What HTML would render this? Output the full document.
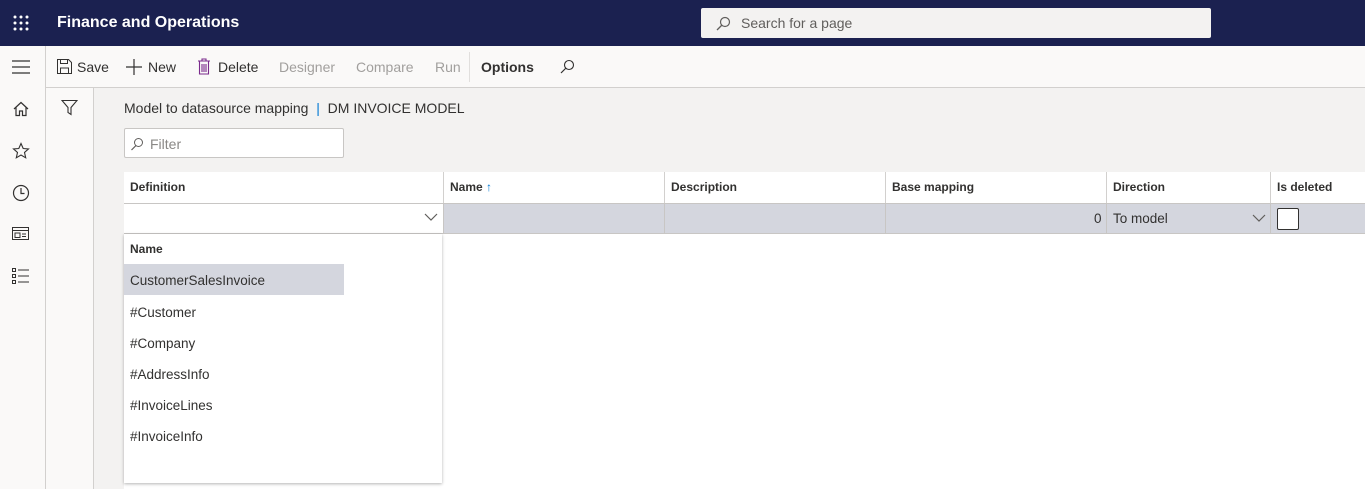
<!DOCTYPE html>
<html><head><style>
*{box-sizing:border-box;margin:0;padding:0}
body{width:1365px;height:489px;overflow:hidden;font-family:"Segoe UI","Liberation Sans",sans-serif;font-size:14px;color:#323130;background:#f3f2f1;position:relative}
.a{position:absolute}
.hdr{left:0;top:0;width:1365px;height:46px;background:#1b2150;color:#fff}
.rail{left:0;top:46px;width:46px;height:443px;background:#faf9f8;border-right:1px solid #d2d0ce}
.tb{left:46px;top:46px;width:1319px;height:42px;background:#faf9f8;border-bottom:1px solid #d2d0ce}
.tb span{position:absolute;top:13px;font-size:14px}
.fp{left:46px;top:88px;width:48px;height:401px;background:#faf9f8;border-right:1px solid #d2d0ce}
.grid{left:124px;top:172px;width:1241px;height:317px;background:#fff}
.th{position:absolute;top:0;height:31px;border-right:1px solid #d2d0ce;font-size:12px;font-weight:600;padding:8px 6px;color:#323130}
.row{left:124px;top:203px;width:1241px;height:31px;background:#d4d6de;border-top:1px solid #c8c6c4;border-bottom:1px solid #c8c6c4}
.dd{left:124px;top:234px;width:318px;height:249px;background:#fff;box-shadow:0 1px 3px rgba(0,0,0,.3)}
.it{position:absolute;left:6px;font-size:13.5px}
</style></head><body>
<div class="a hdr">
<svg class="a" style="left:13px;top:15px" width="16" height="16"><g fill="#fff"><circle cx="2" cy="2" r="1.5"/><circle cx="8" cy="2" r="1.5"/><circle cx="14" cy="2" r="1.5"/><circle cx="2" cy="8" r="1.5"/><circle cx="8" cy="8" r="1.5"/><circle cx="14" cy="8" r="1.5"/><circle cx="2" cy="14" r="1.5"/><circle cx="8" cy="14" r="1.5"/><circle cx="14" cy="14" r="1.5"/></g></svg>
<div class="a" style="left:57px;top:14px;font-size:16px;font-weight:600">Finance and Operations</div>
<div class="a" style="left:701px;top:8px;width:510px;height:30px;background:#f3f2f1;border-radius:2px;color:#605e5c">
<svg class="a" style="left:14px;top:8px" width="16" height="16"><circle cx="10" cy="6" r="4.5" fill="none" stroke="#605e5c" stroke-width="1.2"/><path d="M7 9L2 14" stroke="#605e5c" stroke-width="1.3"/></svg>
<span class="a" style="left:40px;top:7px">Search for a page</span></div>
</div>
<div class="a rail">
<svg class="a" style="left:12px;top:14px" width="18" height="14"><path d="M0 1h18M0 7h18M0 13h18" stroke="#323130" stroke-width="1.2"/></svg>
<svg class="a" style="left:13px;top:55px" width="16" height="16"><path d="M1 8L8 1.5L15 8M3 6.5V14.5H6.5V10H9.5V14.5H13V6.5" fill="none" stroke="#323130" stroke-width="1.2"/></svg>
<svg class="a" style="left:12px;top:96px" width="18" height="18"><path d="M9 1.5l2.2 5 5.3.4-4 3.6 1.2 5.3L9 13l-4.7 2.8 1.2-5.3-4-3.6 5.3-.4z" fill="none" stroke="#323130" stroke-width="1.1"/></svg>
<svg class="a" style="left:12px;top:138px" width="18" height="18"><circle cx="9" cy="9" r="7.5" fill="none" stroke="#323130" stroke-width="1.2"/><path d="M9 4v5.5h3.5" fill="none" stroke="#323130" stroke-width="1.2"/></svg>
<svg class="a" style="left:12px;top:181px" width="18" height="14"><rect x=".5" y=".5" width="16" height="12" fill="none" stroke="#323130"/><path d="M1 3.5h15" stroke="#323130"/><rect x="3" y="6" width="5" height="4.5" fill="none" stroke="#323130"/><path d="M10 7h4M10 9.5h4" stroke="#323130"/></svg>
<svg class="a" style="left:12px;top:222px" width="18" height="16"><g fill="none" stroke="#323130"><rect x=".5" y=".5" width="3" height="3"/><rect x=".5" y="6.5" width="3" height="3"/><rect x=".5" y="12.5" width="3" height="3"/><path d="M6 2h11M6 8h11M6 14h11"/></g></svg>
</div>
<div class="a tb">
<svg class="a" style="left:11px;top:13px" width="15" height="15"><path d="M.5.5h11l3 3v11H.5z" fill="none" stroke="#323130"/><rect x="3.5" y="9" width="8" height="5.5" fill="none" stroke="#323130"/><rect x="3.5" y=".5" width="7" height="4" fill="none" stroke="#323130"/></svg>
<span style="left:31px">Save</span>
<svg class="a" style="left:80px;top:13px" width="16" height="16"><path d="M8 0v16M0 8h16" stroke="#323130" stroke-width="1.2"/></svg>
<span style="left:102px">New</span>
<svg class="a" style="left:151px;top:12px" width="14" height="17"><path d="M1 3h12M5 3V1h4v2M2.5 3.5v12.5h9V3.5M5 6v8M7 6v8M9 6v8" fill="none" stroke="#7a2a8c" stroke-width="1.1"/></svg>
<span style="left:172px">Delete</span>
<span style="left:233px;color:#a19f9d">Designer</span>
<span style="left:310px;color:#a19f9d">Compare</span>
<span style="left:389px;color:#a19f9d">Run</span>
<div class="a" style="left:423px;top:6px;width:1px;height:30px;background:#e1dfdd"></div>
<span style="left:435px;font-weight:600">Options</span>
<svg class="a" style="left:513px;top:13px" width="16" height="16"><circle cx="10" cy="6" r="4.5" fill="none" stroke="#323130" stroke-width="1.1"/><path d="M7 9L2 14" stroke="#323130" stroke-width="1.2"/></svg>
</div>
<div class="a fp"><svg class="a" style="left:15px;top:11px" width="17" height="17"><path d="M1 1.5h15L10 8.5v7l-3-2V8.5z" fill="none" stroke="#323130" stroke-width="1.1"/></svg></div>
<div class="a" style="left:124px;top:100px;font-size:14px">Model to datasource mapping &nbsp;<span style="color:#0078d4">|</span>&nbsp; DM INVOICE MODEL</div>
<div class="a" style="left:124px;top:128px;width:220px;height:30px;background:#fff;border:1px solid #c8c6c4;border-radius:2px">
<svg class="a" style="left:5px;top:8px" width="14" height="14"><circle cx="8.5" cy="5.5" r="4" fill="none" stroke="#605e5c"/><path d="M6 8.5L1.5 13" stroke="#605e5c" stroke-width="1.2"/></svg>
<span class="a" style="left:25px;top:7px;color:#8a8886">Filter</span></div>
<div class="a grid">
<div class="th" style="left:0;width:320px">Definition</div>
<div class="th" style="left:320px;width:221px">Name <span style="color:#0078d4;font-weight:400">&#8593;</span></div>
<div class="th" style="left:541px;width:221px">Description</div>
<div class="th" style="left:762px;width:221px">Base mapping</div>
<div class="th" style="left:983px;width:164px">Direction</div>
<div class="th" style="left:1147px;width:94px;border-right:0">Is deleted</div>
</div>
<div class="a row">
<div class="a" style="left:0;top:0;width:320px;height:29px;background:#fff;border-right:1px solid #c8c6c4"><svg class="a" style="left:300px;top:9px" width="14" height="9"><path d="M1 1l6 6 6-6" fill="none" stroke="#605e5c" stroke-width="1.2"/></svg></div>
<div class="a" style="left:540px;top:0;width:1px;height:29px;background:#c8c6c4"></div>
<div class="a" style="left:761px;top:0;width:1px;height:29px;background:#c8c6c4"></div>
<div class="a" style="left:982px;top:0;width:1px;height:29px;background:#c8c6c4"></div>
<div class="a" style="left:1146px;top:0;width:1px;height:29px;background:#c8c6c4"></div>
<span class="a" style="left:970px;top:7px;color:#323130;font-size:13.5px">0</span>
<span class="a" style="left:989px;top:7px;font-size:13.5px">To model</span>
<svg class="a" style="left:1128px;top:10px" width="14" height="9"><path d="M1 1l6 6 6-6" fill="none" stroke="#605e5c" stroke-width="1.2"/></svg>
<div class="a" style="left:1153px;top:4px;width:22px;height:22px;background:#fff;border:1px solid #323130;border-radius:2px"></div>
</div>
<div class="a dd">
<div class="a" style="left:6px;top:8px;font-size:12px;font-weight:600">Name</div>
<div class="a" style="left:0;top:30px;width:220px;height:31px;background:#d4d6de"></div>
<div class="it" style="top:39px">CustomerSalesInvoice</div>
<div class="it" style="top:71px">#Customer</div>
<div class="it" style="top:102px">#Company</div>
<div class="it" style="top:133px">#AddressInfo</div>
<div class="it" style="top:164px">#InvoiceLines</div>
<div class="it" style="top:195px">#InvoiceInfo</div>
</div>
</body></html>
